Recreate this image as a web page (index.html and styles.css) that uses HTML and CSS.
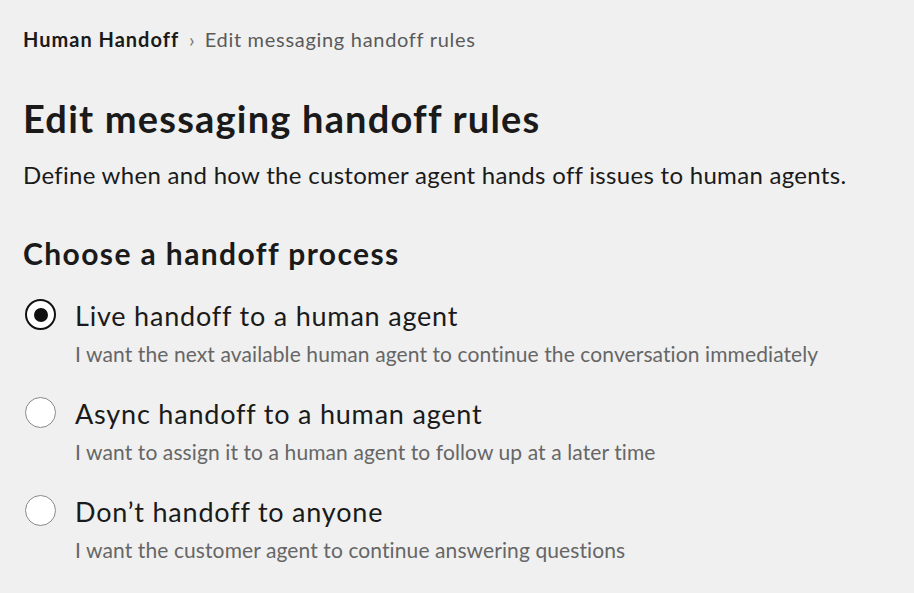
FILE: index.html
```html
<!doctype html>
<html>
<head>
<meta charset="utf-8">
<title>Edit messaging handoff rules</title>
<link rel="stylesheet" href="styles.css">
</head>
<body>
<nav class="crumbs">
  <a class="crumb-root" href="#">Human Handoff</a>
  <span class="crumb-sep">&rsaquo;</span>
  <span class="crumb-current">Edit messaging handoff rules</span>
</nav>
<h1>Edit messaging handoff rules</h1>
<p class="lead">Define when and how the customer agent hands off issues to human agents.</p>
<h2>Choose a handoff process</h2>
<div class="options">
  <label class="option">
    <input type="radio" name="handoff" value="live" checked>
    <span class="opt-text">
      <span class="opt-title">Live handoff to a human agent</span>
      <span class="opt-desc">I want the next available human agent to continue the conversation immediately</span>
    </span>
  </label>
  <label class="option">
    <input type="radio" name="handoff" value="async">
    <span class="opt-text">
      <span class="opt-title">Async handoff to a human agent</span>
      <span class="opt-desc">I want to assign it to a human agent to follow up at a later time</span>
    </span>
  </label>
  <label class="option">
    <input type="radio" name="handoff" value="none">
    <span class="opt-text">
      <span class="opt-title">Don&rsquo;t handoff to anyone</span>
      <span class="opt-desc">I want the customer agent to continue answering questions</span>
    </span>
  </label>
</div>
</body>
</html>
```
FILE: styles.css
```css
body{font-family:Lato,"Noto Sans",sans-serif;margin:0;padding:27px 23px;background:#f0f0f0;color:#1a1a1a}
.crumbs{display:flex;align-items:center;gap:10px;font-size:20px;line-height:30px;margin-top:-3px}
.crumb-root{font-weight:700;color:#1a1a1a;text-decoration:none;letter-spacing:1px}
.crumb-sep{color:#777;font-size:20px}
.crumb-current{color:#5a5a5a;letter-spacing:.7px}
h1{font-size:38px;font-weight:700;margin:41px 0 0;line-height:46px;letter-spacing:1.2px}
.lead{font-size:24px;margin:17px 0 0;line-height:34px;letter-spacing:.3px}
h2{font-size:30px;font-weight:700;margin:42px 0 0;line-height:38px;letter-spacing:1.4px}
.options{display:flex;flex-direction:column;gap:27px;margin-top:26px}
.option{display:flex;align-items:flex-start;gap:19px;cursor:pointer}
.option input{appearance:none;margin:1px 0 0 2px;width:31px;height:31px;border-radius:50%;border:1.5px solid #8a8a8a;background:#fff;flex:none;display:grid;place-items:center}
.option input:checked{border:2px solid #111}
.option input:checked::after{content:"";width:14px;height:14px;border-radius:50%;background:#111}
.opt-text{display:flex;flex-direction:column}
.opt-title{font-size:27px;line-height:36px;letter-spacing:.8px}
.opt-desc{font-size:21px;line-height:30px;color:#666;margin-top:5px;letter-spacing:.1px}
```
